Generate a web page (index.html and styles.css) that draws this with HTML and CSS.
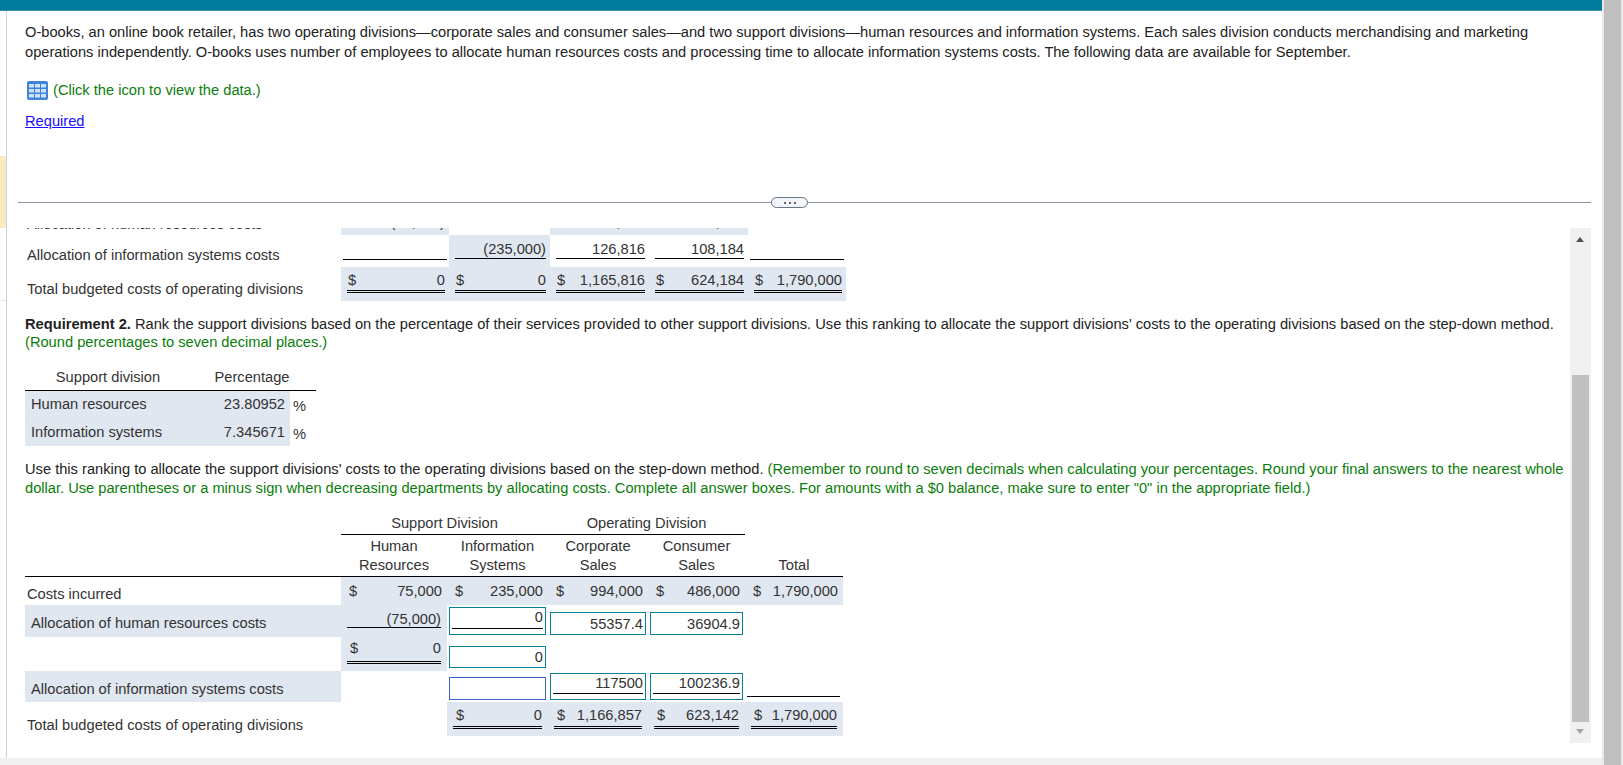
FILE: index.html
```html
<!DOCTYPE html>
<html lang="en">
<head>
<meta charset="utf-8">
<title>O-books step-down allocation</title>
<link rel="stylesheet" href="styles.css">
</head>
<body>
<div class="topbar"></div>
<div class="frame">
  <div class="rail"><div class="rail-mark"></div><div class="rail-line"></div></div>
  <main class="panel">
    <section class="intro">
      <p class="lead">O-books, an online book retailer, has two operating divisions—corporate sales and consumer sales—and two support divisions—human resources and information systems. Each sales division conducts merchandising and marketing operations independently. O-books uses number of employees to allocate human resources costs and processing time to allocate information systems costs. The following data are available for September.</p>
      <p class="data-link">
        <svg class="grid-icon" width="21" height="19" viewBox="0 0 21 19" aria-hidden="true"><rect width="21" height="19" rx="2" fill="#3f83d8"/><g fill="#cfe1f7"><rect x="2" y="3" width="5" height="3.5"/><rect x="8" y="3" width="5" height="3.5"/><rect x="14" y="3" width="5" height="3.5"/><rect x="2" y="8" width="5" height="3.5"/><rect x="8" y="8" width="5" height="3.5"/><rect x="14" y="8" width="5" height="3.5"/><rect x="2" y="13" width="5" height="3.5"/><rect x="8" y="13" width="5" height="3.5"/><rect x="14" y="13" width="5" height="3.5"/></g></svg>
        <span class="green">(Click the icon to view the data.)</span>
      </p>
      <p class="required"><a href="#req">Required</a></p>
    </section>
    <div class="divider"><span class="pill"><i></i><i></i><i></i></span></div>
    <section class="pane">
      <div class="pane-body">
        <table class="sheet top-sheet">
          <colgroup><col class="c0"><col class="u1"><col class="u2"><col class="u3"><col class="u4"><col class="u5"></colgroup>
          <tr class="r-clip">
            <td class="label">Allocation of human resources costs</td>
            <td class="tint"><div class="amt"><span></span><span>(75,000)</span></div></td>
            <td></td>
            <td class="tint"><div class="amt"><span></span><span>45,000</span></div></td>
            <td class="tint"><div class="amt"><span></span><span>30,000</span></div></td>
            <td></td>
          </tr>
          <tr class="r-info">
            <td class="label">Allocation of information systems costs</td>
            <td><div class="amt rule low">&nbsp;</div></td>
            <td class="tint"><div class="amt rule"><span></span><span>(235,000)</span></div></td>
            <td><div class="amt rule"><span></span><span>126,816</span></div></td>
            <td><div class="amt rule"><span></span><span>108,184</span></div></td>
            <td><div class="amt rule low">&nbsp;</div></td>
          </tr>
          <tr class="r-total">
            <td class="label">Total budgeted costs of operating divisions</td>
            <td class="tint"><div class="amt dbl"><span>$</span><span>0</span></div></td>
            <td class="tint"><div class="amt dbl"><span>$</span><span>0</span></div></td>
            <td class="tint"><div class="amt dbl"><span>$</span><span>1,165,816</span></div></td>
            <td class="tint"><div class="amt dbl"><span>$</span><span>624,184</span></div></td>
            <td class="tint"><div class="amt dbl"><span>$</span><span>1,790,000</span></div></td>
          </tr>
        </table>

        <p class="req2"><b>Requirement 2.</b> Rank the support divisions based on the percentage of their services provided to other support divisions. Use this ranking to allocate the support divisions' costs to the operating divisions based on the step-down method. <span class="green">(Round percentages to seven decimal places.)</span></p>

        <table class="rank">
          <colgroup><col class="rc1"><col class="rc2"><col class="rc3"></colgroup>
          <thead><tr><th class="rank-name">Support division</th><th class="rank-pct">Percentage</th><th class="rank-unit"></th></tr></thead>
          <tbody>
            <tr><td class="tint rank-label">Human resources</td><td class="tint num">23.80952</td><td class="unit">%</td></tr>
            <tr><td class="tint rank-label">Information systems</td><td class="tint num">7.345671</td><td class="unit">%</td></tr>
          </tbody>
        </table>

        <p class="req3">Use this ranking to allocate the support divisions' costs to the operating divisions based on the step-down method. <span class="green">(Remember to round to seven decimals when calculating your percentages. Round your final answers to the nearest whole dollar. Use parentheses or a minus sign when decreasing departments by allocating costs. Complete all answer boxes. For amounts with a $0 balance, make sure to enter "0" in the appropriate field.)</span></p>

        <table class="sheet main-sheet">
          <colgroup><col class="c0"><col class="m1"><col class="m2"><col class="m3"><col class="m4"><col class="m5"></colgroup>
          <thead>
            <tr class="h-group">
              <th></th>
              <th colspan="2" class="under">Support Division</th>
              <th colspan="2" class="under">Operating Division</th>
              <th></th>
            </tr>
            <tr class="h-cols">
              <th></th>
              <th>Human<br>Resources</th>
              <th>Information<br>Systems</th>
              <th>Corporate<br>Sales</th>
              <th>Consumer<br>Sales</th>
              <th>Total</th>
            </tr>
          </thead>
          <tbody>
            <tr class="r1">
              <td class="label">Costs incurred</td>
              <td class="tint"><div class="amt"><span>$</span><span>75,000</span></div></td>
              <td class="tint"><div class="amt"><span>$</span><span>235,000</span></div></td>
              <td class="tint"><div class="amt"><span>$</span><span>994,000</span></div></td>
              <td class="tint"><div class="amt"><span>$</span><span>486,000</span></div></td>
              <td class="tint"><div class="amt"><span>$</span><span>1,790,000</span></div></td>
            </tr>
            <tr class="r2">
              <td class="label tint inset">Allocation of human resources costs</td>
              <td class="tint"><div class="amt rule"><span></span><span>(75,000)</span></div></td>
              <td><div class="box tall"><div class="box-in rule">0</div></div></td>
              <td><div class="box short">55357.4</div></td>
              <td><div class="box short">36904.9</div></td>
              <td></td>
            </tr>
            <tr class="r3">
              <td></td>
              <td class="tint"><div class="amt dbl"><span>$</span><span>0</span></div></td>
              <td><div class="box mini">0</div></td>
              <td></td><td></td><td></td>
            </tr>
            <tr class="r4">
              <td class="label tint inset">Allocation of information systems costs</td>
              <td></td>
              <td><div class="box empty"></div></td>
              <td><div class="box tall"><div class="box-in rule">117500</div></div></td>
              <td><div class="box tall"><div class="box-in rule">100236.9</div></div></td>
              <td><div class="amt rule low">&nbsp;</div></td>
            </tr>
            <tr class="r5">
              <td class="label">Total budgeted costs of operating divisions</td>
              <td></td>
              <td class="tint"><div class="amt dbl"><span>$</span><span>0</span></div></td>
              <td class="tint"><div class="amt dbl"><span>$</span><span>1,166,857</span></div></td>
              <td class="tint"><div class="amt dbl"><span>$</span><span>623,142</span></div></td>
              <td class="tint"><div class="amt dbl"><span>$</span><span>1,790,000</span></div></td>
            </tr>
          </tbody>
        </table>
      </div>
      <div class="pane-scroll">
        <span class="arrow up"></span>
        <div class="pane-track"><div class="pane-thumb"></div></div>
        <span class="arrow down"></span>
      </div>
    </section>
  </main>
  <div class="page-scroll"><div class="page-thumb"></div></div>
</div>
<div class="footband"></div>
</body>
</html>
```
FILE: styles.css
```css
* { box-sizing: border-box; }
html, body { margin: 0; height: 100%; }
body {
  width: 1623px;
  height: 765px;
  overflow: hidden;
  background: #f0f0f0;
  font-family: "Liberation Sans", Arial, sans-serif;
  font-size: 14.67px;
  color: #222;
  display: flex;
  flex-direction: column;
}
p { margin: 0; }
.green { color: #0a7d0a; }

.topbar { height: 11px; background: #007b9e; flex: none; border-bottom: 1px solid #2f8ea9; }
.frame { flex: none; height: 747px; display: flex; }
.rail { width: 7px; flex: none; background: #fff; border-right: 1px solid #c8d3e3; padding-top: 145px; }
.rail-mark { width: 6px; height: 72px; background: #f9ebbd; }
.rail-line { width: 6px; height: 1px; margin-top: 72px; background: #e6e6e6; }

.panel { width: 1595px; flex: none; background: #fff; display: flex; flex-direction: column; }
.intro { height: 191px; padding: 11px 60px 0 18px; }
.lead { line-height: 20px; width: 1520px; color: #222; }
.data-link { display: flex; align-items: center; gap: 5px; margin-top: 18px; padding-left: 2px; height: 20px; }
.grid-icon { flex: none; }
.required { margin-top: 11px; line-height: 20px; }
.required a { color: #1a0dff; text-decoration: underline; }

.divider { height: 1px; margin: 0 11px 0 11px; background: #8a94a6; position: relative; flex: none; }
.pill {
  position: absolute;
  left: 753px;
  top: -5px;
  width: 37px;
  height: 11px;
  border: 1px solid #66768c;
  border-radius: 6px;
  background: #f3f5f8;
  display: flex;
  align-items: center;
  justify-content: center;
  gap: 3px;
}
.pill i { width: 2px; height: 2px; background: #5a6878; display: block; }

.pane { flex: none; height: 515px; margin-top: 25px; display: flex; }
.pane-body { width: 1563px; overflow: hidden; padding-left: 18px; flex: none; }
.pane-scroll { width: 21px; flex: none; background: #f0f0f0; display: flex; flex-direction: column; align-items: center; position: relative; }
.pane-track { flex: 1; width: 100%; }
.pane-thumb { position: absolute; left: 2px; right: 2px; top: 147px; height: 347px; background: #c0c0c0; }
.arrow { position: absolute; left: 6px; width: 0; height: 0; border-left: 4.5px solid transparent; border-right: 4.5px solid transparent; }
.arrow.up { top: 9px; border-bottom: 5px solid #505050; }
.arrow.down { bottom: 9px; border-top: 5px solid #a3a3a3; }

.page-scroll { width: 21px; flex: none; background: #e9e9e9; padding: 0 2px; margin-top: -11px; margin-bottom: -7px; }
.page-thumb { height: 100%; background: #c0c0c0; }
.footband { flex: 1; background: #f0f0f0; width: 1602px; }

.sheet { border-collapse: collapse; table-layout: fixed; color: #333; }
.sheet td, .sheet th { padding: 0; font-weight: normal; }
.c0 { width: 316px; }
.u1 { width: 108px; } .u2 { width: 101px; } .u3 { width: 99px; } .u4 { width: 99px; } .u5 { width: 98px; }
.m1 { width: 106px; } .m2 { width: 101px; } .m3 { width: 100px; } .m4 { width: 97px; } .m5 { width: 98px; }
.top-sheet { width: 821px; margin-top: -23px; }
.main-sheet { width: 818px; margin-top: 15px; }
.tint { background: #e1e7f1; }

.sheet .label { padding-left: 2px; line-height: 17px; color: #333; }
.sheet .inset { padding-left: 6px; }
.amt { display: flex; justify-content: space-between; margin: 0 6px 0 6px; line-height: 18px; }
.rule { border-bottom: 1px solid #000; }
.dbl { border-bottom: 3px double #000; padding-left: 3px; }

.r-clip { height: 30px; }
.r-clip td { vertical-align: top; }
.r-clip .amt { padding-top: 8px; margin-right: 4px; }
.sheet .r-clip .label { padding-top: 11px; }

.r-info { height: 32px; }
.r-info td { vertical-align: top; }
.r-info .amt { height: 24px; padding-top: 5px; margin-right: 4px; }
.r-info .amt.low { height: 25px; margin-left: 2px; margin-right: 2px; }
.sheet .r-info .label { padding-top: 12px; }
.r-total { height: 34px; }
.r-total td { vertical-align: top; }
.r-total .amt { height: 26px; padding-top: 4px; margin-right: 4px; padding-left: 1px; }
.sheet .r-total .label { padding-top: 14px; }

.req2 { line-height: 18px; margin-top: 14px; width: 1545px; color: #222; }
.req3 { line-height: 18.5px; margin-top: 14px; width: 1545px; color: #222; }

.rank { border-collapse: collapse; table-layout: fixed; width: 291px; margin-top: 13px; color: #333; }
.rc1 { width: 166px; } .rc2 { width: 99px; } .rc3 { width: 26px; }
.rank th, .rank td { padding: 0; font-weight: normal; }
.rank-name { height: 26px; border-bottom: 1px solid #000; text-align: center; }
.rank .rank-pct { border-bottom: 1px solid #000; text-align: center; padding-left: 23px; }
.rank-unit { border-bottom: 1px solid #000; }
.rank .rank-label { padding-left: 6px; height: 28px; }
.rank .num { text-align: right; padding-right: 5px; }
.rank .unit { padding: 4px 0 0 3px; }

.h-group th { height: 22px; vertical-align: middle; }
.h-group .under { border-bottom: 1px solid #000; }
.h-cols th { height: 42px; vertical-align: bottom; line-height: 19px; border-bottom: 1px solid #000; }
.sheet .h-cols th { padding-bottom: 1px; }
.r1 { height: 29px; }
.r2 { height: 32px; }
.r3 { height: 34px; }
.r4 { height: 31px; }
.r5 { height: 34px; }
.r1 td, .r2 td, .r3 td, .r4 td, .r5 td { vertical-align: top; }
.sheet .r1 td { padding-top: 5px; }
.sheet .r1 .label { padding-top: 9px; }
.r1 .amt { padding-left: 2px; margin-right: 5px; }
.sheet .r2 .label { padding-top: 10px; }
.r2 .amt { height: 23px; padding-top: 5px; }
.r3 .amt { height: 27px; padding-top: 2px; }
.sheet .r4 .label { padding-top: 10px; }
.r4 .amt.low { margin: 24px 3px 0 2px; height: 2px; line-height: 1px; overflow: hidden; }
.r5 .amt { height: 27px; padding-top: 4px; }
.sheet .r5 .label { padding-top: 15px; }

.box { border: 1px solid #0c7d9b; background: #fff; margin: 0 2px; text-align: right; padding-right: 2px; line-height: 18px; color: #333; }
.tall { height: 28px; margin-top: 2px; padding: 0 2px 0 2px; }
.box-in { height: 21px; }
.short { height: 23px; margin-top: 7px; padding-top: 2px; }
.mini { height: 22px; margin-top: 9px; padding-top: 1px; }
.empty { height: 23px; margin-top: 6px; border-color: #3b66c4; }
.r4 .tall { height: 27px; margin-top: 2px; }
.r4 .box-in { height: 20px; }
```
